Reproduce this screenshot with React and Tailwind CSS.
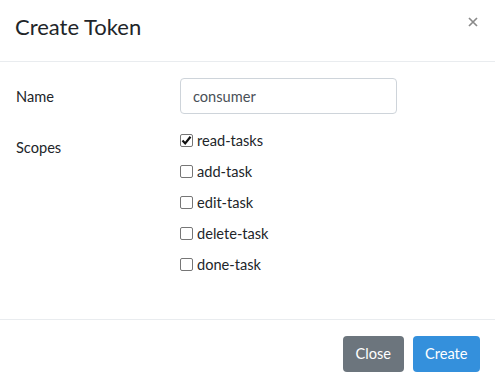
const scopes = [
  { name: 'read-tasks', checked: true },
  { name: 'add-task', checked: false },
  { name: 'edit-task', checked: false },
  { name: 'delete-task', checked: false },
  { name: 'done-task', checked: false },
];

const Box = ({ checked }) => (
  <span className="w-[13px] h-[13px] border border-[#767676] rounded-[2px] bg-white flex items-center justify-center shrink-0">
    {checked && (
      <svg width="11" height="11" viewBox="0 0 11 11">
        <path d="M1.5 5.5 L4.2 8.4 L9.5 1.8" fill="none" stroke="#111" strokeWidth="2.2" />
      </svg>
    )}
  </span>
);

export default function App() {
  return (
    <div className="w-[495px] h-[387px] bg-white text-[#212529] text-[14.6px] flex flex-col" style={{ fontFamily: 'Lato, "Noto Sans", sans-serif' }}>
      {/* header */}
      <div className="h-[62px] border-b border-[#e9ecef] flex items-start justify-between pl-[15px] pr-4 pt-[12px]">
        <h5 className="text-[22px] leading-[30px]">Create Token</h5>
        <button className="mt-[5px] mr-[1px]">
          <svg width="10" height="10" viewBox="0 0 10 10">
            <path d="M1 1 L9 9 M9 1 L1 9" stroke="#8a8a8a" strokeWidth="1.7" />
          </svg>
        </button>
      </div>

      {/* body */}
      <div className="h-[257px] px-4 pt-4">
        <div className="flex items-center mb-4">
          <label className="w-[164px] pt-[1px]">Name</label>
          <input
            className="w-[217px] h-[36px] border border-[#ced4da] rounded-[4px] px-3 outline-none text-[#495057]"
            defaultValue="consumer"
            style={{ fontFamily: 'inherit' }}
          />
        </div>
        <div className="flex">
          <label className="w-[164px] pt-[7px]">Scopes</label>
          <div className="flex flex-col">
            {scopes.map((s) => (
              <div key={s.name} className="flex items-center gap-[4px] h-[21px] mb-[10px]">
                <Box checked={s.checked} />
                <span>{s.name}</span>
              </div>
            ))}
          </div>
        </div>
      </div>

      {/* footer */}
      <div className="flex-1 border-t border-[#e9ecef] flex items-center justify-end gap-[9px] pr-[15px]">
        <button className="h-[36px] px-[12.5px] rounded-[4px] bg-[#6c757d] text-white">Close</button>
        <button className="h-[36px] px-[12.5px] rounded-[4px] bg-[#3490dc] text-white">Create</button>
      </div>
    </div>
  );
}
